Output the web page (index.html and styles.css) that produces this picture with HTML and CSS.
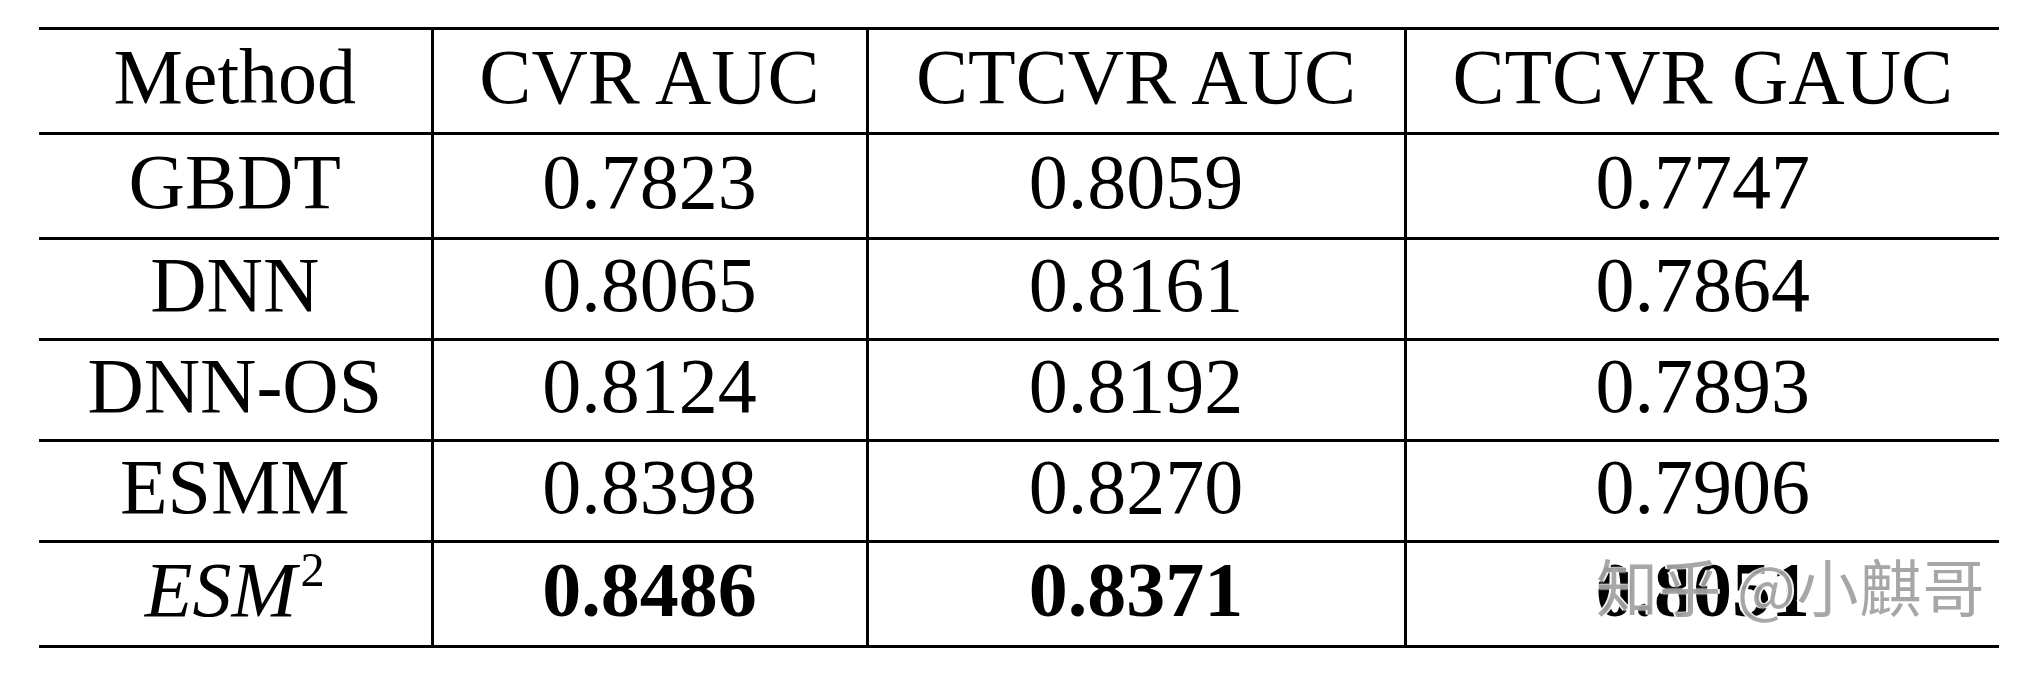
FILE: index.html
```html
<!DOCTYPE html>
<html lang="en">
<head>
    <meta charset="UTF-8">
    <title>ESM2 Results</title>
    <link rel="stylesheet" href="styles.css">
</head>
<body>
    <div class="sheet">
        <table class="results">
            <colgroup>
                <col class="col-method">
                <col class="col-cvr">
                <col class="col-ctcvr">
                <col class="col-gauc">
            </colgroup>
            <tr class="row-head">
                <td>Method</td>
                <td>CVR AUC</td>
                <td>CTCVR AUC</td>
                <td>CTCVR GAUC</td>
            </tr>
            <tr class="row-a">
                <td>GBDT</td>
                <td>0.7823</td>
                <td>0.8059</td>
                <td>0.7747</td>
            </tr>
            <tr class="row-b">
                <td>DNN</td>
                <td>0.8065</td>
                <td>0.8161</td>
                <td>0.7864</td>
            </tr>
            <tr class="row-b">
                <td>DNN-OS</td>
                <td>0.8124</td>
                <td>0.8192</td>
                <td>0.7893</td>
            </tr>
            <tr class="row-b">
                <td>ESMM</td>
                <td>0.8398</td>
                <td>0.8270</td>
                <td>0.7906</td>
            </tr>
            <tr class="row-a best">
                <td><span class="math">ESM<sup>2</sup></span></td>
                <td>0.8486</td>
                <td>0.8371</td>
                <td>0.8051</td>
            </tr>
        </table>
        <div class="watermark">知乎 @小麒哥</div>
    </div>
</body>
</html>
```

FILE: styles.css
```css
body, html {
    margin: 0;
    background: #fff;
}

.sheet {
    position: relative;
    width: 2036px;
    height: 674px;
    padding: 27px 0 0 39px;
    box-sizing: border-box;
}

.results {
    border-collapse: collapse;
    font-family: "Liberation Serif", "Times New Roman", serif;
    font-size: 78px;
    color: #000;
}

.col-method { width: 393px; }
.col-cvr { width: 435px; }
.col-ctcvr { width: 538px; }
.col-gauc { width: 594px; }

.results td {
    border: 3px solid #000;
    padding: 0 0 9px 0;
    line-height: 1;
    text-align: center;
    vertical-align: middle;
    white-space: nowrap;
}

.results tr td:first-child { border-left: none; }
.results tr td:last-child { border-right: none; }

.row-head td { height: 93px; }
.row-a td { height: 93px; }
.row-b td { height: 89px; }

.best td {
    font-weight: bold;
}

.best .math {
    font-weight: normal;
    font-style: italic;
}

.math sup {
    font-style: normal;
    font-size: 0.62em;
    line-height: 0;
    vertical-align: 0.62em;
    margin-left: 4px;
}

.watermark {
    position: absolute;
    left: 1596px;
    top: 548px;
    font-family: "Noto Sans CJK SC", sans-serif;
    font-size: 62px;
    line-height: 1.2;
    color: #a3a3a3;
    letter-spacing: 1px;
    text-shadow: 0 0 2px #fff, 0 0 2px #fff, 2px 0 0 #fff, -2px 0 0 #fff;
    opacity: 0.95;
}
```
